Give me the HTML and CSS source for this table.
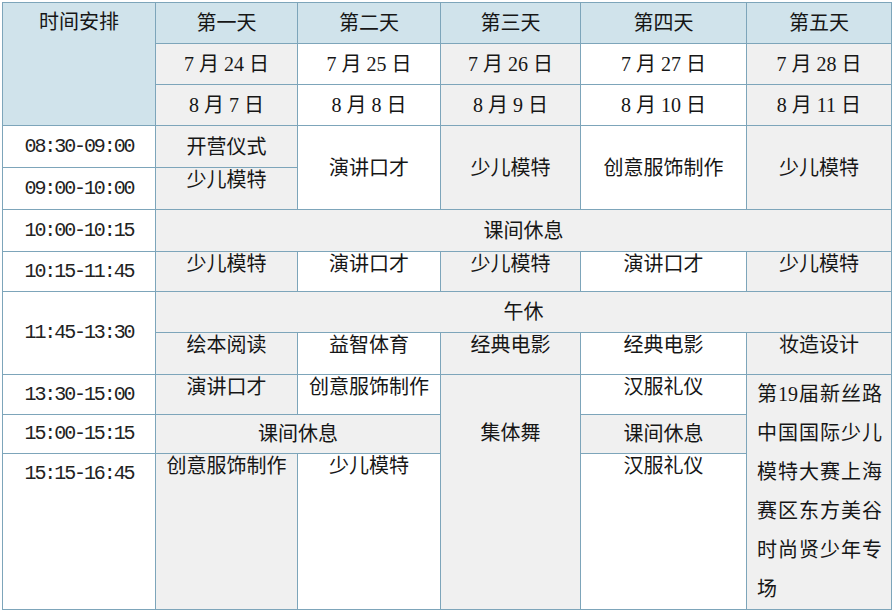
FILE: index.html
```html
<!DOCTYPE html>
<html lang="zh-CN">
<head>
<meta charset="utf-8">
<title>课程安排</title>
<link rel="stylesheet" href="styles.css">
</head>
<body>
<table class="schedule">
  <colgroup>
    <col class="c-time">
    <col class="c-d1">
    <col class="c-d2">
    <col class="c-d3">
    <col class="c-d4">
    <col class="c-d5">
  </colgroup>
  <tr class="h41">
    <td class="hdr corner" rowspan="3">时间安排</td>
    <td class="hdr">第一天</td>
    <td class="hdr">第二天</td>
    <td class="hdr">第三天</td>
    <td class="hdr">第四天</td>
    <td class="hdr">第五天</td>
  </tr>
  <tr class="h41">
    <td class="g">7 月 24 日</td>
    <td class="w">7 月 25 日</td>
    <td class="g">7 月 26 日</td>
    <td class="w">7 月 27 日</td>
    <td class="g">7 月 28 日</td>
  </tr>
  <tr class="h41">
    <td class="g">8 月 7 日</td>
    <td class="w">8 月 8 日</td>
    <td class="g">8 月 9 日</td>
    <td class="w">8 月 10 日</td>
    <td class="g">8 月 11 日</td>
  </tr>
  <tr class="h42">
    <td class="time">08:30-09:00</td>
    <td class="g">开营仪式</td>
    <td class="w" rowspan="2">演讲口才</td>
    <td class="g" rowspan="2">少儿模特</td>
    <td class="w" rowspan="2">创意服饰制作</td>
    <td class="g" rowspan="2">少儿模特</td>
  </tr>
  <tr class="h42">
    <td class="time">09:00-10:00</td>
    <td class="g top">少儿模特</td>
  </tr>
  <tr class="h42">
    <td class="time">10:00-10:15</td>
    <td class="g" colspan="5">课间休息</td>
  </tr>
  <tr class="h40">
    <td class="time">10:15-11:45</td>
    <td class="g top">少儿模特</td>
    <td class="w top">演讲口才</td>
    <td class="g top">少儿模特</td>
    <td class="w top">演讲口才</td>
    <td class="g top">少儿模特</td>
  </tr>
  <tr class="h41">
    <td class="time" rowspan="2">11:45-13:30</td>
    <td class="g" colspan="5">午休</td>
  </tr>
  <tr class="h42">
    <td class="g top">绘本阅读</td>
    <td class="w top">益智体育</td>
    <td class="g top">经典电影</td>
    <td class="w top">经典电影</td>
    <td class="g top">妆造设计</td>
  </tr>
  <tr class="h40">
    <td class="time">13:30-15:00</td>
    <td class="g top">演讲口才</td>
    <td class="w top">创意服饰制作</td>
    <td class="g top dance" rowspan="3">集体舞</td>
    <td class="w top">汉服礼仪</td>
    <td class="g top long" rowspan="3">第19届新丝路中国国际少儿模特大赛上海赛区东方美谷时尚贤少年专场</td>
  </tr>
  <tr class="h39">
    <td class="time">15:00-15:15</td>
    <td class="g" colspan="2">课间休息</td>
    <td class="g">课间休息</td>
  </tr>
  <tr class="h156">
    <td class="time top last">15:15-16:45</td>
    <td class="g top">创意服饰制作</td>
    <td class="w top">少儿模特</td>
    <td class="w top">汉服礼仪</td>
  </tr>
</table>
</body>
</html>
```
FILE: styles.css
```css
html, body {
  margin: 0;
  padding: 0;
  background: #ffffff;
}

body {
  padding: 2px 0 0 2px;
}

.schedule {
  border-collapse: collapse;
  table-layout: fixed;
  width: 890px;
  font-family: "Liberation Serif", "Noto Sans CJK SC", serif;
  font-size: 20px;
  line-height: 24px;
  color: #161616;
}

.c-time { width: 153px; }
.c-d1 { width: 142px; }
.c-d2 { width: 143px; }
.c-d3 { width: 140px; }
.c-d4 { width: 166px; }
.c-d5 { width: 145px; }

.schedule td {
  border: 1px solid #7da5ba;
  padding: 0;
  text-align: center;
  vertical-align: middle;
  white-space: nowrap;
}

.h39 { height: 39px; }
.h40 { height: 40px; }
.h41 { height: 41px; }
.h42 { height: 42px; }
.h156 { height: 156px; }

.hdr {
  background: #d0e3eb;
}

.schedule td.corner {
  vertical-align: top;
  padding-top: 7px;
}

.g { background: #f0f0f0; }
.w { background: #ffffff; }

.time {
  background: #ffffff;
  font-family: "Liberation Mono", monospace;
  font-weight: normal;
  letter-spacing: -2.1px;
  color: #222222;
}

.schedule td.top {
  vertical-align: top;
}

.schedule td.last {
  padding-top: 8px;
}

.schedule td.dance {
  padding-top: 46px;
}

.schedule td.long {
  white-space: normal;
  text-align: justify;
  line-height: 39px;
  padding: 0 9px 0 10px;
  word-break: break-all;
}
```
